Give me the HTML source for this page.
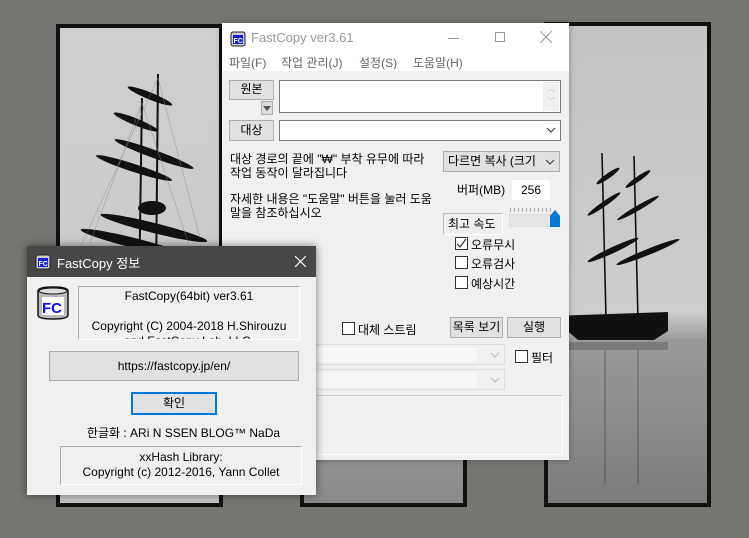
<!DOCTYPE html>
<html><head><meta charset="utf-8"><style>
*{margin:0;padding:0;box-sizing:border-box}
body{width:749px;height:538px;overflow:hidden;background:#787672;position:relative;font-family:"Liberation Sans","Noto Sans CJK KR",sans-serif;font-size:12px;color:#000}
.a{position:absolute}
.frame{position:absolute;background:#111;}
.pic{position:absolute;left:4px;top:4px;right:4px;bottom:4px;background:linear-gradient(#cfcfcf,#c6c6c6)}
.btn{position:absolute;background:#e1e1e1;border:1px solid #adadad;text-align:center}
.cb{position:absolute;width:13px;height:13px;border:1px solid #333;background:#fff}
.t{position:absolute;white-space:nowrap}
</style></head><body>
<!-- frames -->
<div class="frame" style="left:56px;top:24px;width:167px;height:483px"><div class="pic">
<svg width="159" height="475" style="position:absolute;left:0;top:0">
<g stroke="#111" fill="#111">
<line x1="98" y1="46" x2="94" y2="460" stroke-width="2"/>
<line x1="82" y1="70" x2="76" y2="460" stroke-width="2"/>
<g stroke="none">
<ellipse cx="90" cy="68" rx="24" ry="3.5" transform="rotate(22 90 68)"/>
<ellipse cx="76" cy="94" rx="24" ry="3.5" transform="rotate(22 76 94)"/>
<ellipse cx="94" cy="126" rx="42" ry="4" transform="rotate(20 94 126)"/>
<ellipse cx="74" cy="140" rx="40" ry="4" transform="rotate(18 74 140)"/>
<ellipse cx="94" cy="200" rx="55" ry="5" transform="rotate(14 94 200)"/>
<ellipse cx="74" cy="215" rx="55" ry="5" transform="rotate(14 74 215)"/>
<ellipse cx="92" cy="180" rx="14" ry="7"/>
</g></g>
<g stroke="#888" stroke-width=".4" fill="none"><path d="M98 50 L20 220 M98 50 L140 210 M82 75 L30 215 M82 75 L130 220"/></g>
</svg></div></div>
<div class="frame" style="left:300px;top:300px;width:167px;height:207px"><div class="pic" style="background:linear-gradient(#a8a8a8,#8a8a8a)"></div></div>
<div class="frame" style="left:544px;top:22px;width:167px;height:485px"><div class="pic" style="background:linear-gradient(#c4c4c4 0%,#cdcdcd 60%,#9a9a9a 66%,#7c7c7c 100%)">
<svg width="159" height="477" style="position:absolute;left:0;top:0">
<g fill="#111" stroke="#111">
<line x1="54" y1="127" x2="58" y2="292" stroke-width="1.6"/>
<line x1="86" y1="130" x2="90" y2="294" stroke-width="1.6"/>
<g stroke="none">
<ellipse cx="60" cy="150" rx="14" ry="2.5" transform="rotate(-35 60 150)"/>
<ellipse cx="56" cy="178" rx="20" ry="2.5" transform="rotate(-35 56 178)"/>
<ellipse cx="90" cy="153" rx="15" ry="2.5" transform="rotate(-35 90 153)"/>
<ellipse cx="90" cy="182" rx="24" ry="2.5" transform="rotate(-30 90 182)"/>
<ellipse cx="65" cy="224" rx="28" ry="3" transform="rotate(-25 65 224)"/>
<ellipse cx="100" cy="226" rx="34" ry="3" transform="rotate(-22 100 226)"/>
<path d="M4 290 L120 286 L120 305 L106 314 L30 314 L14 300 Z"/>
</g></g>
<g fill="#444" opacity=".35"><rect x="56" y="318" width="2" height="140"/><rect x="89" y="318" width="2" height="140"/><rect x="20" y="316" width="100" height="8"/></g>
</svg></div></div>

<!-- main window -->
<div class="a" style="left:222px;top:23px;width:347px;height:437px;background:#f0f0f0;box-shadow:0 0 6px rgba(0,0,0,.35)">
<div class="a" style="left:0;top:0;width:347px;height:48px;background:#fff"></div>
<svg class="a" style="left:8px;top:7px" width="16" height="17"><rect x="1" y="2" width="14" height="14" rx="2" fill="#ccc" stroke="#222"/><rect x="3" y="5" width="10" height="9" fill="#1020e0"/><text x="3.5" y="13" font-size="7" font-weight="bold" fill="#fff" font-family="Liberation Sans">FC</text></svg>
<div class="t" style="left:29px;top:7px;font-size:13px;color:#999">FastCopy ver3.61</div>
<div class="a" style="left:226px;top:15px;width:11px;height:1px;background:#999"></div>
<div class="a" style="left:273px;top:9px;width:10px;height:10px;border:1px solid #999"></div>
<svg class="a" style="left:318px;top:8px" width="12" height="12"><path d="M0 0L12 12M12 0L0 12" stroke="#999"/></svg>
<div class="t" style="left:7px;top:31px;font-size:12px;color:#666">파일(F)</div>
<div class="t" style="left:59px;top:31px;font-size:12px;color:#666">작업 관리(J)</div>
<div class="t" style="left:137px;top:31px;font-size:12px;color:#666">설정(S)</div>
<div class="t" style="left:191px;top:31px;font-size:12px;color:#666">도움말(H)</div>

<div class="btn" style="left:7px;top:57px;width:45px;height:20px;line-height:17px">원본</div>
<div class="btn" style="left:39px;top:78px;width:12px;height:14px;background:#ddd"><svg width="10" height="10"><path d="M1 3L9 3L5 8Z" fill="#555"/></svg></div>
<div class="a" style="left:57px;top:57px;width:282px;height:33px;background:#fff;border:1px solid #7a7a7a"><div class="a" style="right:1px;top:1px;width:16px;height:29px;background:#f0f0f0;color:#bbb;font-size:8px;text-align:center;line-height:13px">︿<br>﹀</div></div>
<div class="btn" style="left:7px;top:97px;width:45px;height:21px;line-height:18px">대상</div>
<div class="a" style="left:57px;top:97px;width:282px;height:21px;background:#fff;border:1px solid #7a7a7a"><svg class="a" style="right:4px;top:6px" width="10" height="7"><path d="M1 1L5 5L9 1" stroke="#333" fill="none"/></svg></div>

<div class="t" style="left:8px;top:129px;line-height:14px">대상 경로의 끝에 "₩" 부착 유무에 따라<br>작업 동작이 달라집니다</div>
<div class="t" style="left:8px;top:169px;line-height:14px">자세한 내용은 "도움말" 버튼을 눌러 도움<br>말을 참조하십시오</div>

<div class="btn" style="left:221px;top:128px;width:117px;height:21px;line-height:19px;text-align:left;padding-left:4px">다르면 복사 (크기<svg class="a" style="right:4px;top:7px" width="10" height="7"><path d="M1 1L5 5L9 1" stroke="#333" fill="none"/></svg></div>
<div class="t" style="left:235px;top:158px">버퍼(MB)</div>
<div class="a" style="left:290px;top:157px;width:38px;height:20px;background:#fff;padding:3px 0 0 9px">256</div>
<div class="a" style="left:288px;top:185px;width:44px;height:4px;background:repeating-linear-gradient(90deg,#aaa 0 1px,transparent 1px 4px)"></div>
<div class="a" style="left:287px;top:191px;width:46px;height:13px;background:#e6e6e6;border:1px solid #ddd"></div>
<div class="a" style="left:328px;top:187px;width:10px;height:17px;background:#0078d7;clip-path:polygon(50% 0,100% 35%,100% 100%,0 100%,0 35%)"></div>
<div class="a" style="left:221px;top:190px;width:60px;height:22px;border:1px solid #bbb;border-right-color:#fff;border-bottom-color:#fff;padding:1px 0 0 4px">최고 속도</div>

<div class="cb" style="left:233px;top:214px"><svg width="11" height="11" style="position:absolute;left:0;top:0"><path d="M1 6L4 9L10 1" stroke="#333" fill="none" stroke-width="1.2"/></svg></div>
<div class="t" style="left:249px;top:213px">오류무시</div>
<div class="cb" style="left:233px;top:233px"></div><div class="t" style="left:249px;top:232px">오류검사</div>
<div class="cb" style="left:233px;top:253px"></div><div class="t" style="left:249px;top:252px">예상시간</div>

<div class="cb" style="left:120px;top:299px"></div><div class="t" style="left:136px;top:298px">대체 스트림</div>
<div class="btn" style="left:228px;top:294px;width:53px;height:21px;line-height:18px">목록 보기</div>
<div class="btn" style="left:285px;top:294px;width:54px;height:21px;line-height:18px">실행</div>
<div class="a" style="left:78px;top:321px;width:205px;height:21px;border:1px solid #ddd;background:#f0f0f0"><div class="a" style="left:0;top:2px;width:176px;height:15px;background:#f6f6f6"></div><svg class="a" style="right:4px;top:7px" width="10" height="7"><path d="M1 1L5 5L9 1" stroke="#bbb" fill="none"/></svg></div>
<div class="a" style="left:78px;top:346px;width:205px;height:21px;border:1px solid #ddd;background:#f0f0f0"><div class="a" style="left:0;top:2px;width:176px;height:15px;background:#f6f6f6"></div><svg class="a" style="right:4px;top:7px" width="10" height="7"><path d="M1 1L5 5L9 1" stroke="#bbb" fill="none"/></svg></div>
<div class="cb" style="left:293px;top:327px"></div><div class="t" style="left:309px;top:326px">필터</div>
<div class="a" style="left:78px;top:372px;width:263px;height:60px;border:1px solid #ccc;border-right-color:#fff;border-bottom-color:#fff"></div>
</div>

<!-- about dialog -->
<div class="a" style="left:27px;top:246px;width:289px;height:249px;background:#f0f0f0;box-shadow:0 0 8px rgba(0,0,0,.5)">
<div class="a" style="left:0;top:0;width:289px;height:31px;background:#474747"></div>
<svg class="a" style="left:8px;top:7px" width="16" height="17"><rect x="1" y="2" width="14" height="14" rx="2" fill="#ccc" stroke="#222"/><rect x="3" y="5" width="10" height="9" fill="#1020e0"/><text x="3.5" y="13" font-size="7" font-weight="bold" fill="#fff" font-family="Liberation Sans">FC</text></svg>
<div class="t" style="left:30px;top:7px;font-size:13px;color:#fff">FastCopy 정보</div>
<svg class="a" style="left:268px;top:10px" width="11" height="11"><path d="M0 0L11 11M11 0L0 11" stroke="#fff" stroke-width="1.2"/></svg>
<svg class="a" style="left:9px;top:40px" width="34" height="34"><path d="M2 5 Q2 1 17 1 Q32 1 32 5 L32 29 Q32 33 17 33 Q2 33 2 29Z" fill="#bbb" stroke="#111" stroke-width="1.5"/><ellipse cx="17" cy="5" rx="14" ry="3" fill="#ddd" stroke="#111"/><rect x="6" y="11" width="22" height="18" fill="#fff"/><text x="6" y="27" font-size="15" font-weight="bold" fill="#1010ee" font-family="Liberation Sans">FC</text></svg>
<div class="a" style="left:51px;top:40px;width:222px;height:54px;border:1px solid #aaa;border-right-color:#fff;border-bottom-color:#fff;overflow:hidden;text-align:center;line-height:15px;padding-top:2px">FastCopy(64bit) ver3.61<br><br>Copyright (C) 2004-2018 H.Shirouzu<br>and FastCopy Lab, LLC.</div>
<div class="btn" style="left:22px;top:105px;width:250px;height:30px;line-height:28px">https://fastcopy.jp/en/</div>
<div class="btn" style="left:104px;top:146px;width:86px;height:23px;border:2px solid #0078d7;line-height:19px">확인</div>
<div class="t" style="left:0;width:289px;text-align:center;top:178px;padding-left:24px">한글화 : ARi N SSEN BLOG™ NaDa</div>
<div class="a" style="left:33px;top:200px;width:242px;height:39px;border:1px solid #aaa;border-right-color:#fff;border-bottom-color:#fff;text-align:center;line-height:15px;padding-top:3px">xxHash Library:<br>Copyright (c) 2012-2016, Yann Collet</div>
</div>
</body></html>
